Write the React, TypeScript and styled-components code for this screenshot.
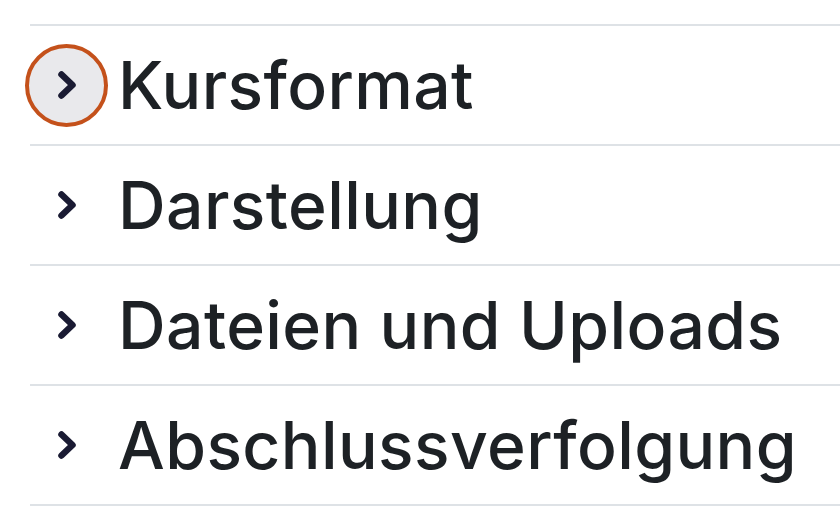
import styled, { createGlobalStyle } from 'styled-components';

const GlobalStyle = createGlobalStyle`
  html, body {
    margin: 0;
    background: #ffffff;
  }
  body {
    font-family: Inter, "Noto Sans", sans-serif;
  }
`;

const sections = [
  { title: 'Kursformat', focused: true },
  { title: 'Darstellung', focused: false },
  { title: 'Dateien und Uploads', focused: false },
  { title: 'Abschlussverfolgung', focused: false },
];

const Chevron = () => (
  <svg width="20" height="30" viewBox="0 0 20 30" fill="none">
    <polyline
      points="4.5,4.5 15.5,15 4.5,25.5"
      stroke="#1a1b33"
      strokeWidth="6.5"
      strokeLinecap="round"
      strokeLinejoin="round"
    />
  </svg>
);

export default function App() {
  return (
    <>
      <GlobalStyle />
      <Page>
        <List>
          {sections.map((s) => (
            <Row key={s.title}>
              <ToggleButton $focused={s.focused} aria-label={s.title}>
                <Chevron />
              </ToggleButton>
              <Title>{s.title}</Title>
            </Row>
          ))}
        </List>
      </Page>
    </>
  );
}

const Page = styled.div`
  width: 840px;
  height: 530px;
  overflow: hidden;
  padding: 24px 0 0 30px;
  box-sizing: border-box;
`;

const List = styled.div`
  display: flex;
  flex-direction: column;
  border-bottom: 2px solid #dee2e6;
`;

const Row = styled.div`
  display: flex;
  align-items: center;
  gap: 10px;
  height: 120px;
  border-top: 2px solid #dee2e6;
  box-sizing: border-box;
`;

const ToggleButton = styled.button<{ $focused: boolean }>`
  display: flex;
  align-items: center;
  justify-content: center;
  width: 83px;
  height: 83px;
  margin-left: -5px;
  padding: 0 0 0 1px;
  border-radius: 50%;
  border: 4px solid ${(p) => (p.$focused ? '#c4511b' : 'transparent')};
  background: ${(p) => (p.$focused ? '#e9e9ec' : 'transparent')};
  box-sizing: border-box;
  flex-shrink: 0;
`;

const Title = styled.span`
  font-size: 66px;
  font-weight: 500;
  color: #1d2125;
  letter-spacing: 0.4px;
  white-space: nowrap;
`;
